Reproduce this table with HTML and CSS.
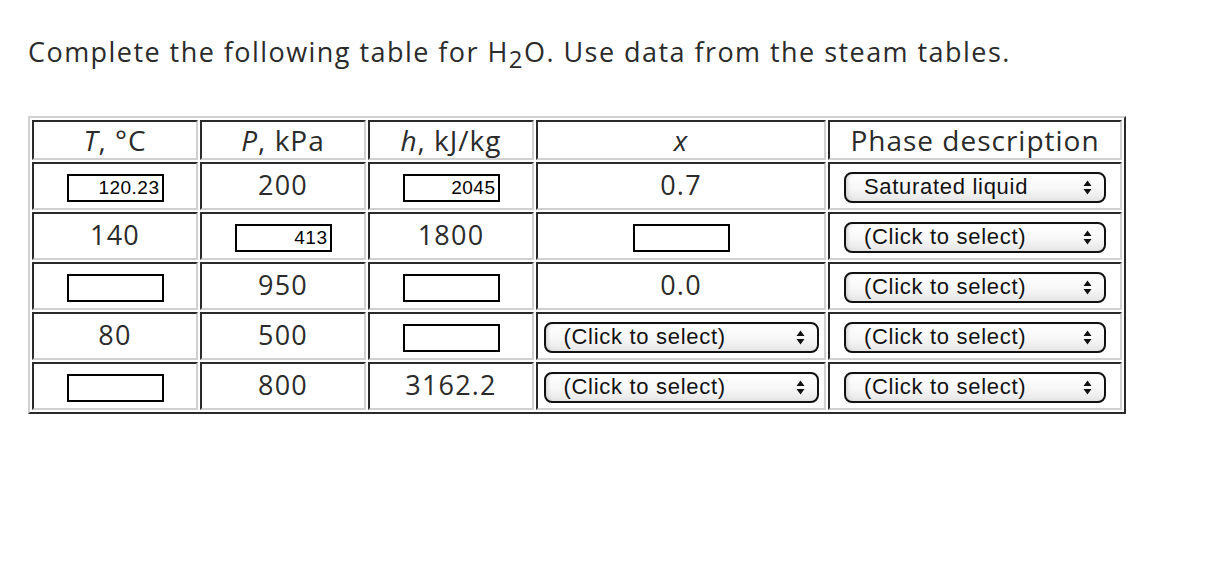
FILE: index.html
```html
<!DOCTYPE html>
<html>
<head>
<meta charset="utf-8">
<link rel="stylesheet" href="styles.css">
</head>
<body>
<p class="prompt">Complete the following table for H<sub>2</sub>O. Use data from the steam tables.</p>
<table class="steam">
  <tr class="head">
    <td class="c1"><i>T</i>, °C</td>
    <td class="c2"><i>P</i>, kPa</td>
    <td class="c3"><i>h</i>, kJ/kg</td>
    <td class="c4"><i>x</i></td>
    <td class="c5">Phase description</td>
  </tr>
  <tr>
    <td><input class="box" type="text" value="120.23"></td>
    <td>200</td>
    <td><input class="box" type="text" value="2045"></td>
    <td>0.7</td>
    <td><div class="sel"><span>Saturated liquid</span><svg class="arr" width="9" height="15" viewBox="0 0 9 15"><path d="M4.5 0.5 L8.5 6 L0.5 6 Z M4.5 14.5 L8.5 9 L0.5 9 Z" fill="#111"/></svg></div></td>
  </tr>
  <tr>
    <td>140</td>
    <td><input class="box" type="text" value="413"></td>
    <td>1800</td>
    <td><input class="box" type="text" value=""></td>
    <td><div class="sel"><span>(Click to select)</span><svg class="arr" width="9" height="15" viewBox="0 0 9 15"><path d="M4.5 0.5 L8.5 6 L0.5 6 Z M4.5 14.5 L8.5 9 L0.5 9 Z" fill="#111"/></svg></div></td>
  </tr>
  <tr>
    <td><input class="box" type="text" value=""></td>
    <td>950</td>
    <td><input class="box" type="text" value=""></td>
    <td>0.0</td>
    <td><div class="sel"><span>(Click to select)</span><svg class="arr" width="9" height="15" viewBox="0 0 9 15"><path d="M4.5 0.5 L8.5 6 L0.5 6 Z M4.5 14.5 L8.5 9 L0.5 9 Z" fill="#111"/></svg></div></td>
  </tr>
  <tr>
    <td>80</td>
    <td>500</td>
    <td><input class="box" type="text" value=""></td>
    <td><div class="sel wide"><span>(Click to select)</span><svg class="arr" width="9" height="15" viewBox="0 0 9 15"><path d="M4.5 0.5 L8.5 6 L0.5 6 Z M4.5 14.5 L8.5 9 L0.5 9 Z" fill="#111"/></svg></div></td>
    <td><div class="sel"><span>(Click to select)</span><svg class="arr" width="9" height="15" viewBox="0 0 9 15"><path d="M4.5 0.5 L8.5 6 L0.5 6 Z M4.5 14.5 L8.5 9 L0.5 9 Z" fill="#111"/></svg></div></td>
  </tr>
  <tr>
    <td><input class="box" type="text" value=""></td>
    <td>800</td>
    <td>3162.2</td>
    <td><div class="sel wide"><span>(Click to select)</span><svg class="arr" width="9" height="15" viewBox="0 0 9 15"><path d="M4.5 0.5 L8.5 6 L0.5 6 Z M4.5 14.5 L8.5 9 L0.5 9 Z" fill="#111"/></svg></div></td>
    <td><div class="sel"><span>(Click to select)</span><svg class="arr" width="9" height="15" viewBox="0 0 9 15"><path d="M4.5 0.5 L8.5 6 L0.5 6 Z M4.5 14.5 L8.5 9 L0.5 9 Z" fill="#111"/></svg></div></td>
  </tr>
</table>
</body>
</html>
```
FILE: styles.css
```css
html, body {
  margin: 0;
  background: #fff;
}
body {
  padding: 34px 28px 0 28px;
  font-family: "Open Sans", Lato, sans-serif;
  color: #2b2b2b;
}
.prompt {
  margin: 0 0 46px 0;
  font-size: 27px;
  line-height: 36px;
  letter-spacing: 1.45px;
}
.prompt sub {
  font-size: 24px;
  vertical-align: -6px;
  line-height: 0;
}
.steam {
  border-collapse: separate;
  border-spacing: 2px;
  border-style: solid;
  border-width: 2px;
  border-color: #d0d0d0 #2a2a2a #2a2a2a #d0d0d0;
  table-layout: fixed;
}
.steam td {
  box-sizing: border-box;
  border-style: solid;
  border-width: 2px;
  border-color: #2a2a2a #d0d0d0 #d0d0d0 #2a2a2a;
  padding: 0 0 2px 0;
  height: 48px;
  text-align: center;
  vertical-align: middle;
  font-size: 27px;
  line-height: 32px;
  letter-spacing: 1.2px;
  color: #2b2b2b;
}
.steam .head td {
  height: 40px;
  padding: 0;
  font-size: 28px;
  line-height: 34px;
  letter-spacing: 1px;
}
.c1, .c2, .c3 { width: 166px; }
.c4 { width: 290px; }
.c5 { width: 294px; }
.box {
  box-sizing: border-box;
  width: 97px;
  height: 28px;
  border: 2px solid #000;
  padding: 0 2px;
  margin: 2px 0 0 0;
  font-family: "Liberation Sans", Arial, sans-serif;
  font-size: 19px;
  letter-spacing: 0.5px;
  color: #000;
  text-align: right;
  vertical-align: middle;
  background: #fff;
  outline: none;
}
.sel {
  box-sizing: border-box;
  display: flex;
  align-items: center;
  justify-content: space-between;
  width: 262px;
  height: 31px;
  margin: 4px auto 0 auto;
  padding: 0 12px 0 18px;
  border: 2px solid #111;
  border-radius: 8px;
  background: linear-gradient(to bottom, #ffffff 0%, #f7f7f7 55%, #e6e6e6 100%);
  box-shadow: inset 3px 0 4px -2px #c8c8c8;
  font-family: "Liberation Sans", Arial, sans-serif;
  font-size: 22px;
  letter-spacing: 0.7px;
  color: #111;
  text-align: left;
}
.sel.wide {
  width: 275px;
}
.arr {
  display: block;
  flex: none;
}
```
